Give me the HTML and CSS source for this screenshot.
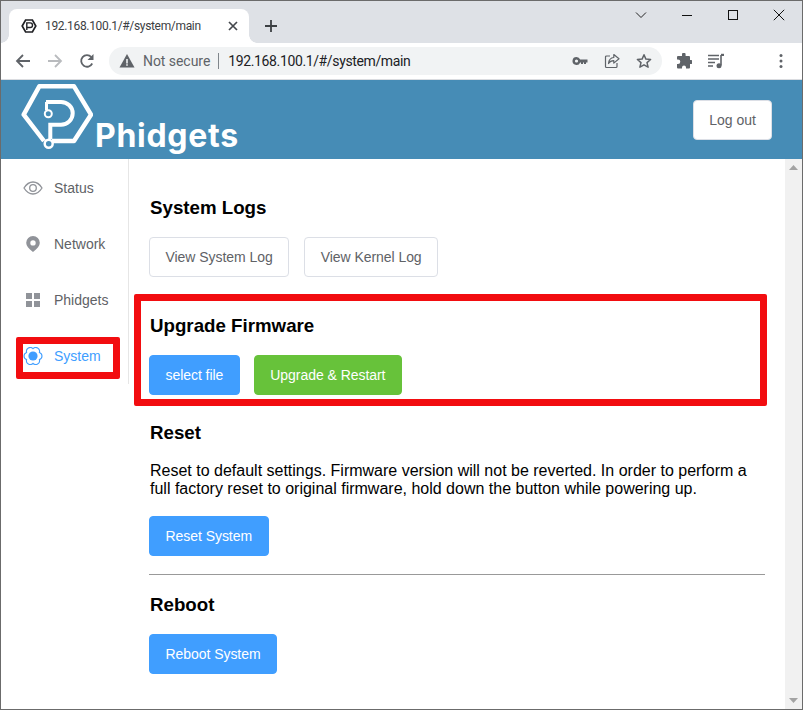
FILE: index.html
```html
<!DOCTYPE html>
<html lang="en">
<head>
<meta charset="utf-8">
<title>Phidgets</title>
<link rel="stylesheet" href="styles.css">
</head>
<body>
<div class="window">
  <div class="tabstrip">
    <div class="tab">
      <svg class="favicon" viewBox="0 0 16 16" width="16" height="16"><path d="M1.200 8 4.600 2h6.800l3.400 6-3.400 6H4.600z" fill="none" stroke="#202124" stroke-width="1.700"/><path d="M5.800 12V4.900h3.400a2.200 2.200 0 0 1 0 4.600H6.200" fill="none" stroke="#202124" stroke-width="1.400"/></svg>
      <span class="tab-title">192.168.100.1/#/system/main</span>
      <svg class="tab-close" viewBox="0 0 16 16" width="16" height="16"><path d="M4 4l8 8M12 4l-8 8" stroke="#45484d" stroke-width="1.700"/></svg>
    </div>
    <svg class="new-tab" viewBox="0 0 16 16" width="16" height="16"><path d="M8 2v12M2 8h12" stroke="#3c4043" stroke-width="1.800"/></svg>
    <div class="win-controls">
      <div class="win-btn"><svg viewBox="0 0 12 12" width="12" height="12"><path d="M1 3.500l5 5 5-5" fill="none" stroke="#222" stroke-width="1"/></svg></div>
      <div class="win-btn"><svg viewBox="0 0 12 12" width="12" height="12"><path d="M1 6.500h10" stroke="#111" stroke-width="1"/></svg></div>
      <div class="win-btn"><svg viewBox="0 0 12 12" width="12" height="12"><rect x="1.500" y="1.500" width="9" height="9" fill="none" stroke="#111" stroke-width="1"/></svg></div>
      <div class="win-btn"><svg viewBox="0 0 12 12" width="12" height="12"><path d="M.8.8l10.400 10.400M11.200.8.8 11.200" stroke="#111" stroke-width="1"/></svg></div>
    </div>
  </div>

  <div class="toolbar">
    <div class="tool"><svg viewBox="0 0 16 16" width="16" height="16"><path d="M15 8H2M8 2 2 8l6 6" fill="none" stroke="#5f6368" stroke-width="1.800"/></svg></div>
    <div class="tool"><svg viewBox="0 0 16 16" width="16" height="16"><path d="M1 8h13M8 2l6 6-6 6" fill="none" stroke="#b9bbbe" stroke-width="1.800"/></svg></div>
    <div class="tool"><svg viewBox="0 0 16 16" width="16" height="16"><path d="M13.200 10.500A5.800 5.800 0 1 1 12.300 4" fill="none" stroke="#5f6368" stroke-width="1.800"/><path d="M14.500 1v6h-6z" fill="#5f6368"/></svg></div>
    <div class="omnibox">
      <svg class="warn" viewBox="0 0 16 16" width="16" height="16"><path d="M8 1 15.500 14.500H.5z" fill="#5f6368"/><path d="M7.200 6h1.600v4.500H7.200zM7.200 11.300h1.600v1.500H7.200z" fill="#f1f3f4"/></svg>
      <span class="not-secure">Not secure</span>
      <span class="divider"></span>
      <span class="url">192.168.100.1/#/system/main</span>
      <div class="omni-actions">
        <div class="tool"><svg viewBox="0 0 16 16" width="16" height="16"><path fill-rule="evenodd" d="M4.500 4a4 4 0 0 1 3.700 2.500H15.500V9.500h-1.500v1.500h-2V9.500h-1v1.500h-2V9.500h-.8A4 4 0 1 1 4.500 4zm0 2.400a1.600 1.600 0 1 0 0 3.200 1.600 1.600 0 0 0 0-3.200z" fill="#5f6368"/></svg></div>
        <div class="tool"><svg viewBox="0 0 16 16" width="16" height="16"><path d="M6 3H2.500A1 1 0 0 0 1.500 4v9.500a1 1 0 0 0 1 1H12a1 1 0 0 0 1-1V10" fill="none" stroke="#5f6368" stroke-width="1.200"/><path d="M9.800 1.500 15 5.800l-5.200 4.300V7.700c-2.600 0-4.200.9-5.300 2.800.3-3.400 2.200-5.700 5.300-6z" fill="none" stroke="#5f6368" stroke-width="1.200" stroke-linejoin="round"/></svg></div>
        <div class="tool"><svg viewBox="0 0 16 16" width="16" height="16"><path d="M8 1.800l1.900 4.300 4.700.4-3.600 3.100 1.100 4.600L8 11.800l-4.100 2.400L5 9.600 1.400 6.500l4.700-.4z" fill="none" stroke="#5f6368" stroke-width="1.500" stroke-linejoin="round"/></svg></div>
      </div>
    </div>
    <div class="tool ext"><svg viewBox="0 0 16 16" width="16" height="16"><path d="M6 1.500a1.800 1.800 0 0 1 3.600 0V3h3.400a1 1 0 0 1 1 1v3h1a2 2 0 0 1 0 4h-1v3.500a1 1 0 0 1-1 1H10v-1a2 2 0 0 0-4 0v1H2a1 1 0 0 1-1-1V11h1a2.300 2.300 0 0 0 0-4.600H1V4a1 1 0 0 1 1-1h4z" fill="#5f6368"/></svg></div>
    <div class="tool"><svg viewBox="0 0 16 16" width="16" height="16"><path d="M0 2.500h11M0 6h11M0 9.500h7M0 13h5" stroke="#5f6368" stroke-width="1.400" fill="none"/><path d="M13 2v10.500" stroke="#5f6368" stroke-width="1.600"/><path d="M13 .8h3V3h-3z" fill="#5f6368"/><circle cx="11" cy="12.800" r="2.500" fill="#5f6368"/></svg></div>
    <div class="tool menu-dots"><svg viewBox="0 0 16 16" width="16" height="16"><circle cx="8" cy="2.500" r="1.500" fill="#5f6368"/><circle cx="8" cy="8" r="1.500" fill="#5f6368"/><circle cx="8" cy="13.500" r="1.500" fill="#5f6368"/></svg></div>
  </div>

  <header class="app-header">
    <div class="logo">
      <svg class="logo-mark" viewBox="0 0 72 66" width="72" height="66">
        <path d="M23 57 2.700 30.700 18.300 2.300H53L70 30.700 53 57H31" fill="none" stroke="#fff" stroke-width="4.500" stroke-linejoin="round"/>
        <path d="M25 18H40c6.500 0 11.700 5 11.700 11.300S46.500 40.700 40 40.700H29.300V55" fill="none" stroke="#fff" stroke-width="4"/>
        <path d="M25.500 18v8" stroke="#fff" stroke-width="3"/>
        <circle cx="27.300" cy="29.700" r="3.500" fill="none" stroke="#fff" stroke-width="2"/>
        <circle cx="27.700" cy="59.700" r="4" fill="none" stroke="#fff" stroke-width="2.500"/>
      </svg>
      <span class="logo-text">Phidgets</span>
    </div>
    <button class="btn btn-logout">Log out</button>
  </header>

  <div class="main">
    <nav class="sidebar">
      <a class="nav-item">
        <svg viewBox="0 0 20 14" width="20" height="14"><path d="M1 7c2.500-4 5.500-6 9-6s6.500 2 9 6c-2.500 4-5.500 6-9 6S3.500 11 1 7z" fill="none" stroke="#909399" stroke-width="1.300"/><circle cx="10" cy="7" r="3.300" fill="none" stroke="#909399" stroke-width="1.300"/></svg>
        <span>Status</span>
      </a>
      <a class="nav-item">
        <svg viewBox="0 0 20 16" width="20" height="16"><path fill-rule="evenodd" d="M10 0a6.800 6.800 0 0 1 6.800 6.800c0 3-2.300 6-6.800 9.200-4.500-3.200-6.800-6.200-6.800-9.200A6.800 6.800 0 0 1 10 0zm0 4.200a2.700 2.700 0 1 0 0 5.400 2.700 2.700 0 0 0 0-5.400z" fill="#909399"/></svg>
        <span>Network</span>
      </a>
      <a class="nav-item">
        <svg viewBox="0 0 20 16" width="20" height="16"><path d="M3 1h6v6H3zM11 1h6v6h-6zM3 9h6v6H3zM11 9h6v6h-6z" fill="#909399"/></svg>
        <span>Phidgets</span>
      </a>
      <a class="nav-item is-active">
        <svg viewBox="0 0 20 18" width="20" height="18"><path d="M10 1.700A3.800 3.800 0 0 1 16.400 5.400 3.800 3.800 0 0 1 16.400 12.600 3.800 3.800 0 0 1 10 16.300 3.800 3.800 0 0 1 3.600 12.600 3.800 3.800 0 0 1 3.600 5.400 3.800 3.800 0 0 1 10 1.700z" fill="none" stroke="#409eff" stroke-width="1.100"/><circle cx="10" cy="9" r="4.600" fill="#409eff"/></svg>
        <span>System</span>
      </a>
    </nav>

    <main class="content">
      <h3 class="title title-first">System Logs</h3>
      <div class="btn-row">
        <button class="btn">View System Log</button>
        <button class="btn">View Kernel Log</button>
      </div>

      <h3 class="title title-firmware">Upgrade Firmware</h3>
      <div class="btn-row btn-row-tight">
        <button class="btn btn-primary">select file</button>
        <button class="btn btn-success">Upgrade &amp; Restart</button>
      </div>

      <h3 class="title title-reset">Reset</h3>
      <p class="note">Reset to default settings. Firmware version will not be reverted. In order to perform a full factory reset to original firmware, hold down the button while powering up.</p>
      <button class="btn btn-primary">Reset System</button>

      <hr class="rule">

      <h3 class="title title-reboot">Reboot</h3>
      <button class="btn btn-primary">Reboot System</button>
    </main>

    <div class="scrollbar">
      <svg viewBox="0 0 9 5" width="9" height="5"><path d="M0 5 4.500 0 9 5z" fill="#a3a3a3"/></svg>
      <svg viewBox="0 0 9 5" width="9" height="5"><path d="M0 0 4.500 5 9 0z" fill="#a3a3a3"/></svg>
    </div>
  </div>

  <div class="callout callout-nav"></div>
  <div class="callout callout-firmware"></div>
</div>
</body>
</html>
```

FILE: styles.css
```css
* { box-sizing: border-box; }

html, body {
  margin: 0;
  padding: 0;
  height: 100%;
  overflow: hidden;
  background: #fff;
}

.window {
  position: relative;
  width: 803px;
  height: 710px;
  display: flex;
  flex-direction: column;
  border: 1px solid #6b6b6b;
  font-family: "Liberation Sans", Arial, sans-serif;
}

/* Browser chrome */
.tabstrip {
  flex: none;
  height: 42px;
  display: flex;
  align-items: flex-start;
  background: #dee1e6;
}

.tab {
  position: relative;
  width: 240px;
  height: 34px;
  margin: 8px 0 0 8px;
  padding: 0 8px 0 12px;
  display: flex;
  align-items: center;
  background: #fff;
  border-radius: 8px 8px 0 0;
}

.tab::before,
.tab::after {
  content: "";
  position: absolute;
  bottom: 0;
  width: 8px;
  height: 8px;
}

.tab::before {
  left: -8px;
  background: radial-gradient(circle at 0 0, #dee1e6 7.5px, #fff 8px);
}

.tab::after {
  right: -8px;
  background: radial-gradient(circle at 100% 0, #dee1e6 7.5px, #fff 8px);
}

.favicon { flex: none; }

.tab-title {
  margin-left: 8px;
  font: 12px Roboto, sans-serif;
  letter-spacing: -.33px;
  color: #3c4043;
  white-space: nowrap;
}

.tab-close { margin-left: auto; }

.new-tab { margin: 17px 0 0 14px; }

.win-controls {
  margin-left: auto;
  display: flex;
}

.win-btn {
  width: 46px;
  height: 28px;
  display: flex;
  align-items: center;
  justify-content: center;
}

.toolbar {
  flex: none;
  height: 37px;
  padding: 0 0 1px 6px;
  display: flex;
  align-items: center;
  background: #fff;
  border-bottom: 1px solid #dadce0;
}

.tool {
  flex: none;
  width: 32px;
  height: 28px;
  display: flex;
  align-items: center;
  justify-content: center;
}

.omnibox {
  flex: none;
  width: 553px;
  height: 28px;
  margin-left: 6px;
  padding: 0 2px 0 10px;
  display: flex;
  align-items: center;
  background: #f1f3f4;
  border-radius: 14px;
  font: 14px Roboto, sans-serif;
}

.warn { flex: none; }

.not-secure {
  margin-left: 8px;
  letter-spacing: -.05px;
  color: #5f6368;
}

.divider {
  width: 1px;
  height: 16px;
  margin: 0 9px 0 8px;
  background: #80868b;
}

.url {
  letter-spacing: -.37px;
  color: #202124;
  white-space: nowrap;
}

.omni-actions {
  margin-left: auto;
  display: flex;
}

.ext { margin-left: 6px; }

.menu-dots { margin-left: 33px; }

/* App header */
.app-header {
  flex: none;
  height: 79px;
  padding: 0 30px 0 20px;
  display: flex;
  align-items: center;
  justify-content: space-between;
  background: #468cb6;
}

.logo {
  display: flex;
  align-items: flex-end;
  align-self: flex-start;
  padding-top: 4px;
}

.logo-mark { flex: none; }

.logo-text {
  margin: 0 0 -4px 2px;
  font: 700 32px/36px Inter, sans-serif;
  letter-spacing: .7px;
  color: #fff;
}

/* Buttons */
.btn {
  height: 40px;
  padding: 0 15.5px;
  border: 1px solid #dcdfe6;
  border-radius: 4px;
  background: #fff;
  color: #606266;
  font: 14px "Liberation Sans", Arial, sans-serif;
  letter-spacing: -.05px;
  white-space: nowrap;
}

.btn-logout { width: 79px; padding: 0; letter-spacing: 0; }

.btn-primary {
  background: #409eff;
  border-color: #409eff;
  color: #fff;
}

.btn-success {
  background: #67c23a;
  border-color: #67c23a;
  color: #fff;
}

/* Page body */
.main {
  flex: 1;
  min-height: 0;
  display: flex;
  align-items: flex-start;
}

.sidebar {
  flex: none;
  width: 128px;
  height: 225px;
  padding-top: 1px;
  border-right: 1px solid #e6e6e6;
}

.nav-item {
  height: 56px;
  padding-left: 22px;
  display: flex;
  align-items: center;
  gap: 11px;
  font-size: 14px;
  color: #606266;
}

.nav-item svg { flex: none; }

.nav-item.is-active { color: #409eff; }

.content {
  flex: 1;
  min-width: 0;
  padding: 37px 20px 0 21px;
}

.title {
  height: 22px;
  margin: 0 0 19px;
  font-size: 18.72px;
  line-height: 24px;
  font-weight: 700;
  color: #000;
}

.title-firmware { margin-top: 37px; }

.title-reset { margin-top: 26px; }

.btn-row {
  display: flex;
  gap: 16px;
}

.btn-row-tight { gap: 15px; }

.note {
  margin: 0 0 18px;
  font-size: 16px;
  line-height: 18px;
  color: #000;
}

.content > .btn { display: block; }

.rule {
  height: 1px;
  margin: 18px 0 18px;
  border: 0;
  background: #999;
}

.content .btn,
.rule { margin-left: -1px; }

.rule { margin-right: 0; }

.scrollbar {
  flex: none;
  align-self: stretch;
  width: 17px;
  padding: 6px 0;
  display: flex;
  flex-direction: column;
  align-items: center;
  justify-content: space-between;
  background: #f1f1f1;
}

/* Red annotation frames drawn over the screenshot */
.callout {
  position: absolute;
  border: 7px solid #f20d10;
  border-radius: 2px;
}

.callout-nav {
  left: 15px;
  top: 336px;
  width: 104px;
  height: 42px;
}

.callout-firmware {
  left: 133px;
  top: 293px;
  width: 633px;
  height: 112px;
}
```
